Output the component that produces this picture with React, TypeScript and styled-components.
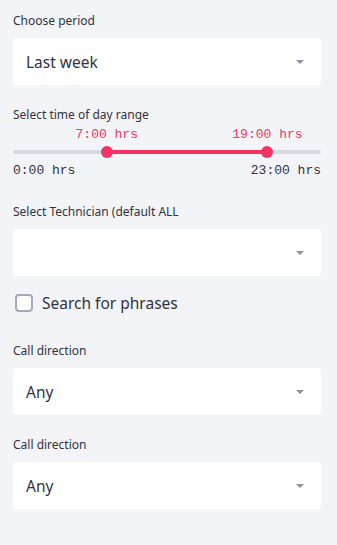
import styled, { createGlobalStyle } from "styled-components";

const GlobalStyle = createGlobalStyle`
  html, body {
    margin: 0;
    padding: 0;
    background: #f3f4f7;
  }
  body {
    font-family: "Noto Sans", "Open Sans", sans-serif;
    color: #31333f;
  }
`;

const Sidebar = styled.div`
  width: 337px;
  height: 545px;
  box-sizing: border-box;
  padding: 13px 16px 0 13px;
  background: #f3f4f7;
  display: flex;
  flex-direction: column;
`;

const Label = styled.div<{ $top?: number }>`
  margin-top: ${(p) => p.$top ?? 0}px;
  height: 16px;
  line-height: 16px;
  font-size: 12px;
  color: #31333f;
  white-space: nowrap;
`;

const SelectBox = styled.div`
  margin-top: 9px;
  height: 47px;
  box-sizing: border-box;
  padding: 0 17px 0 13px;
  background: #ffffff;
  border-radius: 4px;
  display: flex;
  align-items: center;
  justify-content: space-between;
  font-size: 15.5px;
  color: #31333f;
`;

const Caret = styled.span`
  width: 0;
  height: 0;
  border-left: 4px solid transparent;
  border-right: 4px solid transparent;
  border-top: 4px solid #8f909b;
`;

const SliderArea = styled.div`
  position: relative;
  height: 40px;
`;

const Track = styled.div`
  position: absolute;
  left: 0;
  right: 0;
  top: 27px;
  height: 4px;
  border-radius: 2px;
  background: #d6d9e1;
`;

const ActiveTrack = styled.div`
  position: absolute;
  top: 0;
  height: 4px;
  background: #f63366;
`;

const Thumb = styled.div`
  position: absolute;
  top: 23px;
  width: 12px;
  height: 12px;
  margin-left: -6px;
  border-radius: 50%;
  background: #f63366;
`;

const ThumbValue = styled.div`
  position: absolute;
  top: 4px;
  transform: translateX(-50%);
  font-family: "Liberation Mono", "DejaVu Sans Mono", monospace;
  font-size: 13px;
  line-height: 16px;
  color: #f63366;
  white-space: nowrap;
`;

const RangeEnds = styled.div`
  display: flex;
  justify-content: space-between;
  height: 16px;
  line-height: 16px;
  font-family: "Liberation Mono", "DejaVu Sans Mono", monospace;
  font-size: 13px;
  color: #31333f;
`;

const CheckRow = styled.label`
  margin-top: 17px;
  height: 20px;
  display: flex;
  align-items: center;
  gap: 9px;
  padding-left: 2px;
  font-size: 15.5px;
  color: #31333f;
`;

const CheckBox = styled.span`
  width: 18px;
  height: 18px;
  box-sizing: border-box;
  border: 2px solid #a6a9b6;
  border-radius: 4px;
  background: #ffffff;
`;

function Select({ value }: { value?: string }) {
  return (
    <SelectBox>
      <span>{value ?? ""}</span>
      <Caret />
    </SelectBox>
  );
}

function RangeSlider({ min, max, low, high }: { min: number; max: number; low: number; high: number }) {
  const pct = (v: number) => ((v - min) / (max - min)) * 100;
  return (
    <>
      <SliderArea>
        <Track>
          <ActiveTrack style={{ left: `${pct(low)}%`, width: `${pct(high) - pct(low)}%` }} />
        </Track>
        <ThumbValue style={{ left: `${pct(low)}%` }}>{low}:00 hrs</ThumbValue>
        <ThumbValue style={{ left: `${pct(high)}%` }}>{high}:00 hrs</ThumbValue>
        <Thumb style={{ left: `${pct(low)}%` }} />
        <Thumb style={{ left: `${pct(high)}%` }} />
      </SliderArea>
      <RangeEnds>
        <span>{min}:00 hrs</span>
        <span>{max}:00 hrs</span>
      </RangeEnds>
    </>
  );
}

export default function App() {
  return (
    <>
      <GlobalStyle />
      <Sidebar>
        <Label>Choose period</Label>
        <Select value="Last week" />

        <Label $top={22}>Select time of day range</Label>
        <RangeSlider min={0} max={23} low={7} high={19} />

        <Label $top={25}>Select Technician (default ALL</Label>
        <Select />

        <CheckRow>
          <CheckBox />
          Search for phrases
        </CheckRow>

        <Label $top={30}>Call direction</Label>
        <Select value="Any" />

        <Label $top={22}>Call direction</Label>
        <Select value="Any" />
      </Sidebar>
    </>
  );
}
